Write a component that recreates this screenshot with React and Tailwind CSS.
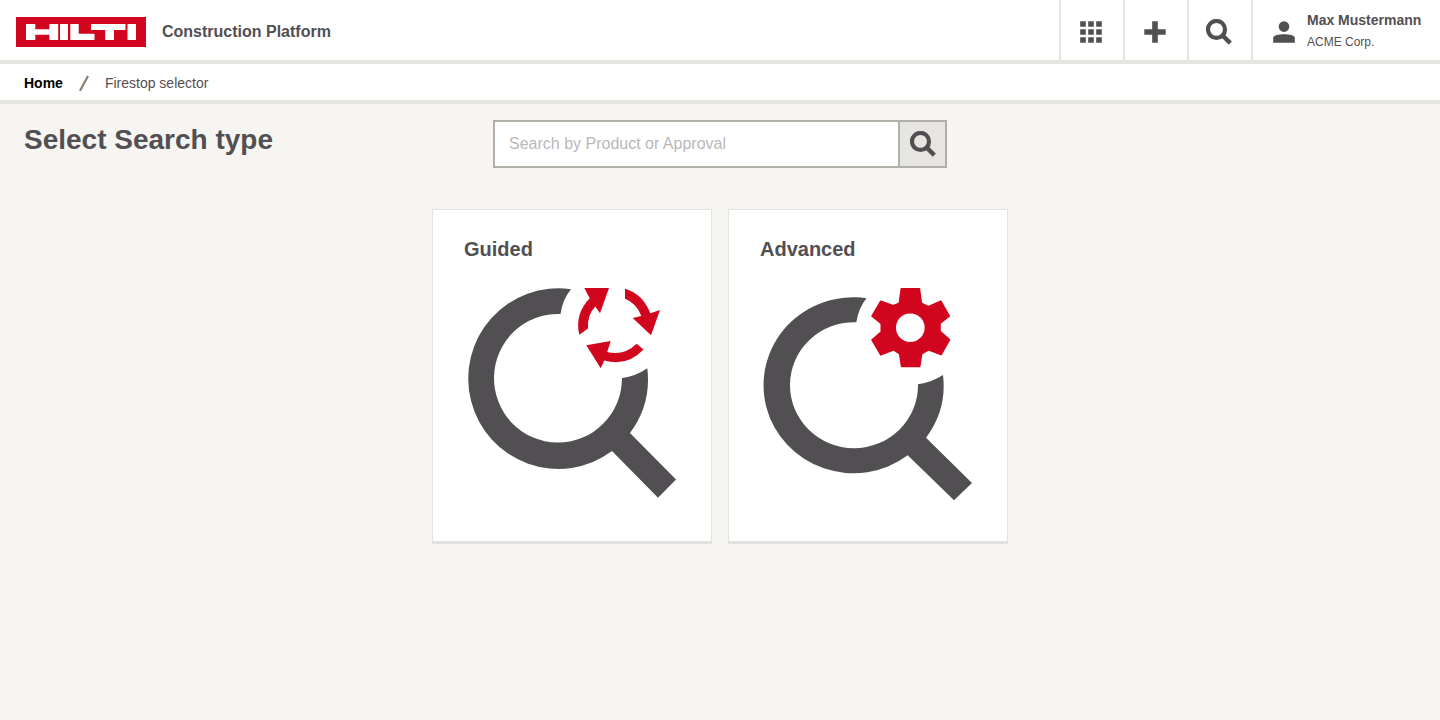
import React from "react";

function Logo() {
  return (
    <svg width="130" height="30" viewBox="0 0 130 30" role="img" aria-label="Hilti">
      <rect width="130" height="30" fill="#d2051e" />
      <g fill="#fff">
        <path d="M10 7h9.300v5.300h14V7h8.900v16h-8.900v-5.200h-14V23H10z" />
        <path d="M44 7h8v16h-8z" />
        <path d="M54.300 7h8.400v9.700h15.800V23H54.300z" />
        <path d="M75 7h34.500v6H98v10h-8.800V13H75z" />
        <path d="M111.500 7h8.500v16h-8.500z" />
      </g>
    </svg>
  );
}

function GridIcon() {
  return (
    <svg width="22" height="22" viewBox="0 0 22 22" fill="currentColor" aria-hidden="true">
      <path d="M.2.2h5.600v5.600H.2zM8.200.2h5.600v5.600H8.200zM16.200.2h5.600v5.600h-5.600zM.2 8.200h5.600v5.600H.2zM8.200 8.200h5.600v5.600H8.200zM16.200 8.200h5.600v5.600h-5.600zM.2 16.200h5.600v5.600H.2zM8.200 16.200h5.600v5.600H8.200zM16.200 16.200h5.600v5.600h-5.600z" />
    </svg>
  );
}

function PlusIcon() {
  return (
    <svg width="22" height="22" viewBox="0 0 22 22" fill="currentColor" aria-hidden="true">
      <path d="M8.200.3h5.600v7.900h7.900v5.600h-7.900v7.900H8.200v-7.900H.3V8.200h7.900z" />
    </svg>
  );
}

function SearchIcon() {
  return (
    <svg width="26" height="26" viewBox="0 0 26 26" fill="none" stroke="currentColor" aria-hidden="true">
      <circle cx="10.500" cy="10.400" r="8.500" strokeWidth="4.200" />
      <path d="M16 15.900l8.300 8.200" strokeWidth="4.400" />
    </svg>
  );
}

function PersonIcon() {
  return (
    <svg width="22" height="22" viewBox="0 0 22 22" fill="currentColor" aria-hidden="true">
      <circle cx="11" cy="5.600" r="5.300" />
      <path d="M.2 21.700v-5C.2 14.300 6 13.200 11 13.200s10.800 1.100 10.800 3.500v5z" />
    </svg>
  );
}

function GuidedArt() {
  return (
    <svg className="block" width="208" height="213" viewBox="0 0 208 213" aria-hidden="true">
      <path
        fill="#524f53"
        d="M103 1.200A90 90.300 0 1 0 144 163l46 46.700 18-18.200L162 145A90 90 0 0 0 179.300 80.300Q167.500 88.500 154 90A64 64.300 0 1 1 92.500 26Q94.500 11.500 103 1.200z"
      />
      <g fill="#d2051e">
        <path d="M116.300 0H141l-9 25.300-4.700-6.800Q119 27 120 40.500l-8.700 6.200Q106.500 26 121.700 10.300z" />
        <path d="M157 .7Q175 6 182.300 25.300L192 22l-9 25.300L164.700 30l8.600-2Q168.500 15 157 10.700z" />
        <path d="M118.300 57.300L142.700 53l-3.500 11Q156 68 168.700 55.700L175.500 61.500Q159 79 136.300 72.500L132.700 80.200z" />
      </g>
    </svg>
  );
}

function AdvancedArt() {
  return (
    <svg className="block overflow-visible" width="208" height="213" viewBox="0 0 208 213" aria-hidden="true">
      <path
        fill="#524f53"
        d="M102.500 10.200A89.800 88 0 1 0 143.700 167.300L190 212.300l18-17.300L162 149.700A90 88 0 0 0 179 87Q167.500 94.500 154 96.200A64 63 0 1 1 92.300 34.200Q94.500 20 102.500 10.200z"
      />
      <path
        fill="#d2051e"
        stroke="#d2051e"
        strokeWidth="2"
        strokeLinejoin="round"
        d="M137.500 1h17.700l2 14.500 7 3.500 12.600-5.600 8.200 14.500-9.200 7.300v8.400l9.500 8.200-8.200 14.500-12.600-4.700-7 4-2 12.700h-17.700l-2-12.700-6-4-13 5-8.500-14.500 9.200-8v-8.600l-9.200-7.600 8.500-14.500 12.500 4.600 6.200-2.500z"
      />
      <circle cx="146.300" cy="39.700" r="14.300" fill="#fff" />
    </svg>
  );
}

function HeaderButton({ label, children }) {
  return (
    <button
      type="button"
      aria-label={label}
      className="flex w-16 items-center justify-center border-l-2 border-[#e6e5e2] pt-1 pr-0.5"
    >
      {children}
    </button>
  );
}

function SearchTypeCard({ title, children }) {
  return (
    <a
      href="#"
      className="block w-70 border border-b-3 border-[#e3e2df] bg-white px-[31px] pt-[23px] pb-10"
    >
      <h2 className="text-xl leading-8 font-bold">{title}</h2>
      <div className="mt-[23px] pl-1">{children}</div>
    </a>
  );
}

export default function App() {
  return (
    <div className="min-h-screen bg-[#f6f5f1] font-['Liberation_Sans',Arial,sans-serif] text-[#524f53]">
      <header className="flex h-16 items-stretch justify-between border-b-4 border-[#e6e5e2] bg-white">
        <div className="flex items-center gap-4 pt-1 pl-4">
          <Logo />
          <span className="text-base font-bold">Construction Platform</span>
        </div>
        <div className="flex">
          <HeaderButton label="Applications">
            <GridIcon />
          </HeaderButton>
          <HeaderButton label="Add">
            <PlusIcon />
          </HeaderButton>
          <HeaderButton label="Search">
            <SearchIcon />
          </HeaderButton>
          <button
            type="button"
            className="flex min-w-[189px] items-center gap-3 border-l-2 border-[#e6e5e2] pr-4 pl-5 text-left"
          >
            <span className="pt-1">
              <PersonIcon />
            </span>
            <span className="flex flex-col pt-px">
              <span className="text-sm leading-[22px] font-bold">Max Mustermann</span>
              <span className="text-xs leading-[22px]">ACME Corp.</span>
            </span>
          </button>
        </div>
      </header>

      <nav
        aria-label="Breadcrumb"
        className="flex h-10 items-center gap-4 border-b-4 border-[#e6e5e2] bg-white px-6 pt-0.5 text-sm"
      >
        <a href="#" className="font-bold text-black">
          Home
        </a>
        <svg width="10" height="16" viewBox="0 0 10 16" aria-hidden="true">
          <path d="M1 15.800L9 1" stroke="#887f6e" strokeWidth="2.200" />
        </svg>
        <span aria-current="page">Firestop selector</span>
      </nav>

      <main className="pt-4">
        <div className="grid grid-cols-[1fr_454px_1fr] items-start px-6">
          <h1 className="text-[28px] leading-10 font-bold">Select Search type</h1>
          <form
            role="search"
            className="flex h-12 border-2 border-[#b2b1a9] bg-white"
            onSubmit={(event) => event.preventDefault()}
          >
            <input
              type="search"
              aria-label="Search by Product or Approval"
              placeholder="Search by Product or Approval"
              className="min-w-0 flex-1 px-3.5 text-base outline-none placeholder:text-[#b9b8b9]"
            />
            <button
              type="submit"
              aria-label="Search"
              className="flex w-[47px] items-center justify-center border-l-2 border-[#b2b1a9] bg-[#e6e5e2]"
            >
              <SearchIcon />
            </button>
          </form>
        </div>

        <div className="mt-[41px] flex flex-wrap justify-center gap-4">
          <SearchTypeCard title="Guided">
            <GuidedArt />
          </SearchTypeCard>
          <SearchTypeCard title="Advanced">
            <AdvancedArt />
          </SearchTypeCard>
        </div>
      </main>
    </div>
  );
}
